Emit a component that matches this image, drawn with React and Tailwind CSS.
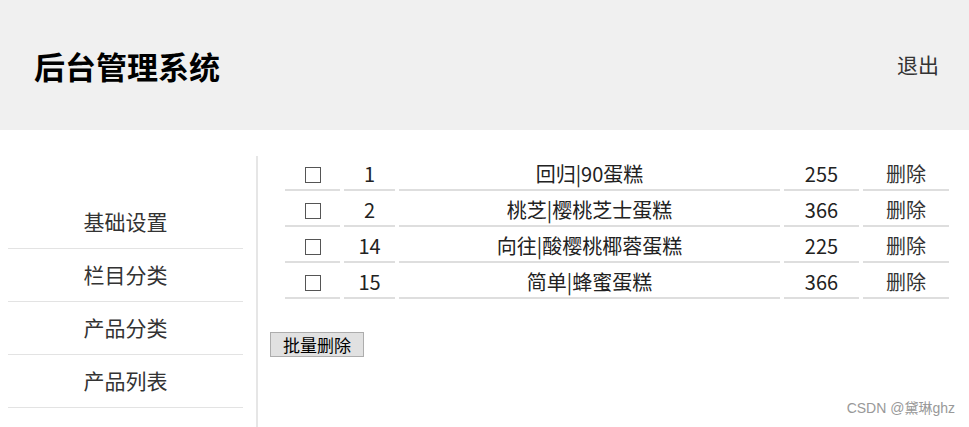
import React from "react";

const rows = [
  { id: 1, name: "回归|90蛋糕", price: 255 },
  { id: 2, name: "桃芝|樱桃芝士蛋糕", price: 366 },
  { id: 14, name: "向往|酸樱桃椰蓉蛋糕", price: 225 },
  { id: 15, name: "简单|蜂蜜蛋糕", price: 366 },
];

const menu = ["基础设置", "栏目分类", "产品分类", "产品列表"];

export default function App() {
  return (
    <div
      className="relative w-[969px] h-[427px] overflow-hidden bg-white text-[#222]"
      style={{ fontFamily: '"Noto Sans CJK SC", "Noto Sans", sans-serif' }}
    >
      <header className="h-[130px] bg-[#f0f0f0] flex items-center justify-between pl-[34px] pr-[30px]">
        <h1 className="text-[31px] font-bold text-black leading-none">后台管理系统</h1>
        <span className="text-[21px] text-[#333]">退出</span>
      </header>

      <div className="flex pt-[26px] h-[297px]">
        <aside className="ml-[8px] w-[235px] pt-[40px]">
          {menu.map((m) => (
            <div
              key={m}
              className="h-[53px] border-b border-[#e3e3e3] flex items-center justify-center text-[21px] text-[#333]"
            >
              {m}
            </div>
          ))}
        </aside>
        <div className="ml-[13px] w-[2px] bg-[#e6e6e6]" />
        <main className="flex-1 pl-[12px]">
          <table className="ml-[11px] -mt-[1px] border-separate border-spacing-x-[4px] border-spacing-y-0 text-[20px]">
            <tbody>
              {rows.map((r) => (
                <tr key={r.id} className="h-[36px]">
                  <td className="w-[55px] pt-[4px] border-b-2 border-[#dedede] text-center align-middle">
                    <span className="inline-block w-[16px] h-[16px] border border-[#555] align-middle mt-[-3px]" />
                  </td>
                  <td className="w-[51px] pt-[4px] border-b-2 border-[#dedede] text-center">{r.id}</td>
                  <td className="w-[381px] pt-[4px] border-b-2 border-[#dedede] text-center">{r.name}</td>
                  <td className="w-[75px] pt-[4px] border-b-2 border-[#dedede] text-center">{r.price}</td>
                  <td className="w-[86px] pt-[4px] border-b-2 border-[#dedede] text-center text-[#333]">删除</td>
                </tr>
              ))}
            </tbody>
          </table>
          <button className="mt-[33px] h-[25px] px-[12px] bg-[#e1e1e1] border border-[#adadad] text-[17px] leading-none text-black">
            批量删除
          </button>
        </main>
      </div>

      <span
        className="absolute right-[14px] bottom-[8px] text-[14px] text-[#999]"
        style={{ fontFamily: '"Liberation Sans", "Noto Sans CJK SC", sans-serif' }}
      >
        CSDN @黛琳ghz
      </span>
    </div>
  );
}
